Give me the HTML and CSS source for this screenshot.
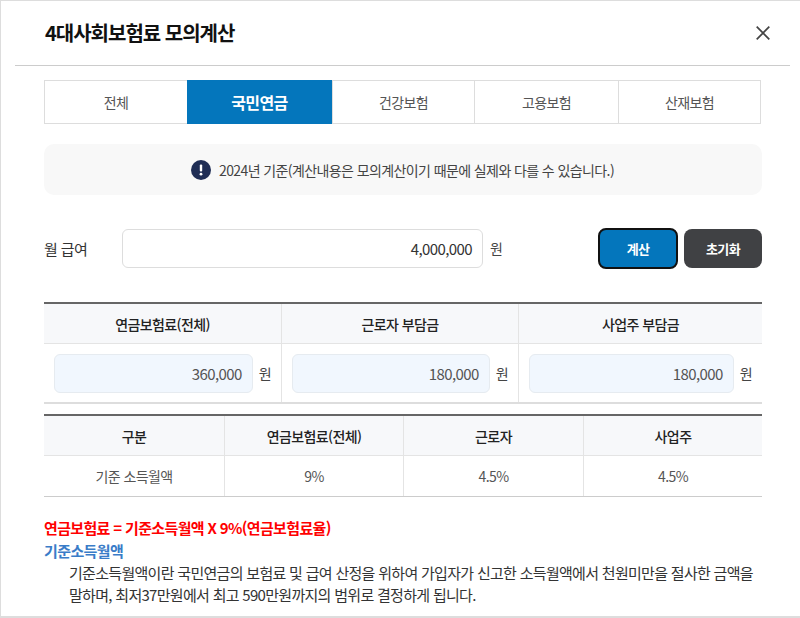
FILE: index.html
```html
<!DOCTYPE html>
<html lang="ko">
<head>
<meta charset="utf-8">
<title>4대사회보험료 모의계산</title>
<link rel="stylesheet" href="styles.css">
</head>
<body>
<div class="modal">
  <header class="modal-head">
    <h1 class="modal-title">4대사회보험료 모의계산</h1>
    <button class="close" aria-label="닫기">
      <svg width="14" height="14" viewBox="0 0 14 14"><path d="M.7.7 13.3 13.3M13.3.7.7 13.3" stroke="#444" stroke-width="1.7" fill="none"/></svg>
    </button>
  </header>
  <main class="modal-body">
    <nav class="tabs">
      <a class="tab">전체</a>
      <a class="tab active">국민연금</a>
      <a class="tab">건강보험</a>
      <a class="tab">고용보험</a>
      <a class="tab">산재보험</a>
    </nav>
    <div class="notice">
      <svg class="notice-icon" width="20" height="20" viewBox="0 0 20 20"><circle cx="10" cy="10" r="10" fill="#1f2d55"/><rect x="8.8" y="4.6" width="2.4" height="7" rx="1" fill="#fff"/><circle cx="10" cy="14.2" r="1.4" fill="#fff"/></svg>
      <span>2024년 기준(계산내용은 모의계산이기 때문에 실제와 다를 수 있습니다.)</span>
    </div>
    <div class="form-row">
      <label class="form-label">월 급여</label>
      <div class="field main-field">4,000,000</div>
      <span class="unit">원</span>
      <div class="actions">
        <button class="btn btn-primary">계산</button>
        <button class="btn btn-dark">초기화</button>
      </div>
    </div>
    <section class="grid grid-3">
      <div class="th">연금보험료(전체)</div>
      <div class="th">근로자 부담금</div>
      <div class="th">사업주 부담금</div>
      <div class="td"><div class="field result">360,000</div><span class="unit">원</span></div>
      <div class="td"><div class="field result">180,000</div><span class="unit">원</span></div>
      <div class="td"><div class="field result">180,000</div><span class="unit">원</span></div>
    </section>
    <section class="grid grid-4">
      <div class="th">구분</div>
      <div class="th">연금보험료(전체)</div>
      <div class="th">근로자</div>
      <div class="th">사업주</div>
      <div class="td">기준 소득월액</div>
      <div class="td">9%</div>
      <div class="td">4.5%</div>
      <div class="td">4.5%</div>
    </section>
    <p class="formula">연금보험료 = 기준소득월액 X 9%(연금보험료율)</p>
    <p class="term">기준소득월액</p>
    <p class="desc">기준소득월액이란 국민연금의 보험료 및 급여 산정을 위하여 가입자가 신고한 소득월액에서 천원미만을 절사한 금액을 말하며, 최저37만원에서 최고 590만원까지의 범위로 결정하게 됩니다.</p>
  </main>
</div>
</body>
</html>
```
FILE: styles.css
```css
* { box-sizing: border-box; }
html, body { margin: 0; padding: 0; height: 100%; background: #fff; }
body {
  font-family: "Noto Sans CJK KR", "Noto Sans", sans-serif;
  font-size: 14px;
  color: #444;
  letter-spacing: -0.6px;
  overflow: hidden;
}
.modal {
  width: 800px;
  height: 618px;
  border: 1px solid #ddd;
  border-bottom-width: 2px;
  border-right-width: 0;
  overflow: hidden;
}
.modal-head {
  height: 65px;
  margin: 0 10px 0 14px;
  padding: 0 20px 0 30px;
  border-bottom: 1px solid #ccc;
  display: flex;
  align-items: center;
  justify-content: space-between;
}
.modal-title {
  margin: 0;
  font-size: 20px;
  line-height: 28px;
  font-weight: 700;
  color: #111;
  letter-spacing: -1px;
}
.close {
  width: 14px;
  height: 14px;
  padding: 0;
  border: 0;
  background: none;
  display: flex;
}
.modal-body { padding: 14px 37px 0 43px; }
.tabs {
  display: grid;
  grid-template-columns: 142px 145px 142px 144px 142px;
  height: 44px;
  border: 1px solid #ddd;
  width: 717px;
}
.tab {
  display: flex;
  align-items: center;
  justify-content: center;
  border-left: 1px solid #ddd;
  color: #555;
}
.tab:first-child { border-left: 0; }
.tab.active {
  background: #0476bc;
  color: #fff;
  font-size: 16px;
  font-weight: 700;
  margin: -1px 0;
  border-left: 0;
}
.notice {
  margin-top: 20px;
  height: 51px;
  width: 718px;
  border-radius: 10px;
  background: #f8f8f8;
  display: flex;
  align-items: center;
  justify-content: center;
  gap: 8px;
  padding-right: 1px;
}
.form-row {
  margin-top: 33px;
  height: 40px;
  width: 718px;
  display: flex;
  align-items: center;
}
.form-label { width: 78px; font-size: 15px; color: #333; }
.field {
  border: 1px solid #ddd;
  border-radius: 6px;
  display: flex;
  align-items: center;
  justify-content: flex-end;
  padding-right: 10px;
  font-size: 15px;
  letter-spacing: -0.6px;
}
.main-field { width: 361px; height: 39px; color: #333; background: #fff; }
.unit { margin-left: 7px; color: #444; }
.actions { margin-left: auto; display: flex; gap: 6px; align-items: center; }
.btn {
  font: inherit;
  letter-spacing: inherit;
  font-size: 13px;
  font-weight: 700;
  color: #fff;
  border: 0;
  border-radius: 8px;
  height: 39px;
  padding: 0;
}
.btn-primary { width: 80px; height: 41px; background: #0476bc; border: 2px solid #111; }
.btn-dark { width: 78px; background: #404144; }
.grid {
  width: 718px;
  display: grid;
  border-top: 2px solid #666;
  border-bottom: 2px solid #ddd;
}
.grid-3 {
  margin-top: 34px;
  grid-template-columns: 237px 237px 244px;
  grid-template-rows: 40px 58px;
}
.grid-4 {
  margin-top: 10px;
  border-bottom-width: 1px;
  border-bottom-color: #ccc;
  grid-template-columns: 180px 179px 180px 179px;
  grid-template-rows: 40px 40px;
}
.th {
  background: #f7f8fa;
  border-bottom: 1px solid #e4e4e4;
  border-left: 1px solid #e4e4e4;
  display: flex;
  align-items: center;
  justify-content: center;
  font-weight: 500;
  color: #222;
}
.td {
  border-left: 1px solid #e4e4e4;
  display: flex;
  align-items: center;
  justify-content: center;
  color: #555;
}
.th:nth-child(1), .grid-3 .td:nth-child(4), .grid-4 .td:nth-child(5) { border-left: 0; }
.grid-3 .td { padding: 0 10px; }
.grid-3 .td .unit { margin-left: 6px; }
.result { flex: 1; height: 39px; background: #f1f7fe; border-color: #e6ebf0; color: #555; }
.formula {
  margin: 19px 0 0;
  line-height: 23px;
  font-size: 15px;
  font-weight: 700;
  letter-spacing: -0.65px;
  color: #f00;
}
.term {
  margin: 0;
  line-height: 23px;
  font-size: 15px;
  font-weight: 700;
  color: #3a7cc8;
}
.desc {
  margin: 0;
  padding-left: 25px;
  line-height: 22px;
  font-size: 15px;
  letter-spacing: -0.7px;
  color: #333;
  width: 718px;
}
```
